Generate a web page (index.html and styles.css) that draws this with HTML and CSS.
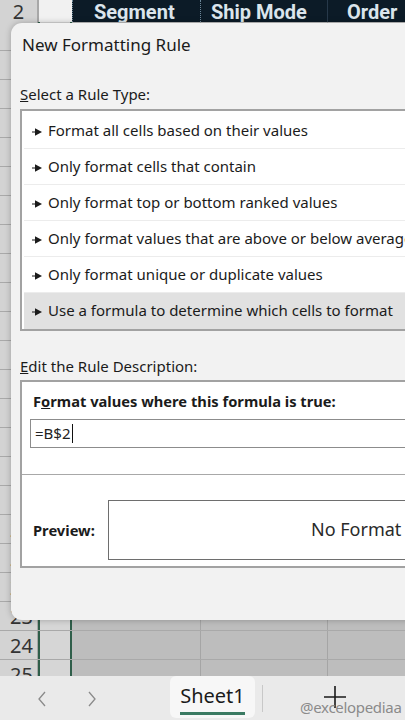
FILE: index.html
```html
<!DOCTYPE html>
<html>
<head>
<meta charset="utf-8">
<link rel="stylesheet" href="styles.css">
</head>
<body>
<div class="sheet">
  <div class="row head">
    <div class="rh">2</div>
    <div class="ca"></div>
    <div class="hdr">
      <div class="hc hb">Segment</div>
      <div class="hc hcc">Ship Mode</div>
      <div class="hc hd">Order</div>
    </div>
  </div>
  <div class="grid">
    <div class="row"><div class="rh">3</div><div class="ca"></div><div class="cells"><div class="cb"></div><div class="cc"></div><div class="cd"></div></div></div>
    <div class="row"><div class="rh">4</div><div class="ca"></div><div class="cells"><div class="cb"></div><div class="cc"></div><div class="cd"></div></div></div>
    <div class="row"><div class="rh">5</div><div class="ca"></div><div class="cells"><div class="cb"></div><div class="cc"></div><div class="cd"></div></div></div>
    <div class="row"><div class="rh">6</div><div class="ca"></div><div class="cells"><div class="cb"></div><div class="cc"></div><div class="cd"></div></div></div>
    <div class="row"><div class="rh">7</div><div class="ca"></div><div class="cells"><div class="cb"></div><div class="cc"></div><div class="cd"></div></div></div>
    <div class="row"><div class="rh">8</div><div class="ca"></div><div class="cells"><div class="cb"></div><div class="cc"></div><div class="cd"></div></div></div>
    <div class="row"><div class="rh">9</div><div class="ca"></div><div class="cells"><div class="cb"></div><div class="cc"></div><div class="cd"></div></div></div>
    <div class="row"><div class="rh">10</div><div class="ca"></div><div class="cells"><div class="cb"></div><div class="cc"></div><div class="cd"></div></div></div>
    <div class="row"><div class="rh">11</div><div class="ca"></div><div class="cells"><div class="cb"></div><div class="cc"></div><div class="cd"></div></div></div>
    <div class="row"><div class="rh">12</div><div class="ca"></div><div class="cells"><div class="cb"></div><div class="cc"></div><div class="cd"></div></div></div>
    <div class="row"><div class="rh">13</div><div class="ca"></div><div class="cells"><div class="cb"></div><div class="cc"></div><div class="cd"></div></div></div>
    <div class="row"><div class="rh">14</div><div class="ca"></div><div class="cells"><div class="cb"></div><div class="cc"></div><div class="cd"></div></div></div>
    <div class="row"><div class="rh">15</div><div class="ca"></div><div class="cells"><div class="cb"></div><div class="cc"></div><div class="cd"></div></div></div>
    <div class="row"><div class="rh">16</div><div class="ca"></div><div class="cells"><div class="cb"></div><div class="cc"></div><div class="cd"></div></div></div>
    <div class="row"><div class="rh">17</div><div class="ca"></div><div class="cells"><div class="cb"></div><div class="cc"></div><div class="cd"></div></div></div>
    <div class="row"><div class="rh">18</div><div class="ca"></div><div class="cells"><div class="cb"></div><div class="cc"></div><div class="cd"></div></div></div>
    <div class="row"><div class="rh">19</div><div class="ca"></div><div class="cells"><div class="cb"></div><div class="cc"></div><div class="cd"></div></div></div>
    <div class="row"><div class="rh">20</div><div class="ca"></div><div class="cells"><div class="cb"></div><div class="cc"></div><div class="cd"></div></div></div>
    <div class="row"><div class="rh">21</div><div class="ca"></div><div class="cells"><div class="cb"></div><div class="cc"></div><div class="cd"></div></div></div>
    <div class="row"><div class="rh">22</div><div class="ca"></div><div class="cells"><div class="cb"></div><div class="cc"></div><div class="cd"></div></div></div>
    <div class="row"><div class="rh">23</div><div class="ca"></div><div class="cells"><div class="cb"></div><div class="cc"></div><div class="cd"></div></div></div>
    <div class="row"><div class="rh">24</div><div class="ca"></div><div class="cells"><div class="cb"></div><div class="cc"></div><div class="cd"></div></div></div>
    <div class="row"><div class="rh">25</div><div class="ca"></div><div class="cells"><div class="cb"></div><div class="cc"></div><div class="cd"></div></div></div>
  </div>
  <div class="tabbar">
    <div class="nav">
      <svg width="10" height="16" viewBox="0 0 10 16"><polyline points="8,1 2,8 8,15" fill="none" stroke="#8a8a8a" stroke-width="1.3"/></svg>
      <svg width="10" height="16" viewBox="0 0 10 16"><polyline points="2,1 8,8 2,15" fill="none" stroke="#8a8a8a" stroke-width="1.3"/></svg>
    </div>
    <div class="tab"><span class="tabtext">Sheet1</span></div>
    <div class="tabsep"></div>
    <div class="plus">
      <svg width="24" height="24" viewBox="0 0 24 24"><path d="M12 1V23M1 12H23" stroke="#1a1a1a" stroke-width="1.6" fill="none"/></svg>
    </div>
  </div>
</div>

<div class="dialog">
  <div class="title">New Formatting Rule</div>
  <div class="label sel"><u>S</u>elect a Rule Type:</div>
  <div class="list">
    <div class="item"><svg class="arr" width="10" height="8" viewBox="0 0 10 8"><path d="M0 3.4H4V4.6H0Z M3 0.3L10 4L3 7.7Z" fill="#1b1b1b"/></svg>Format all cells based on their values</div>
    <div class="item"><svg class="arr" width="10" height="8" viewBox="0 0 10 8"><path d="M0 3.4H4V4.6H0Z M3 0.3L10 4L3 7.7Z" fill="#1b1b1b"/></svg>Only format cells that contain</div>
    <div class="item"><svg class="arr" width="10" height="8" viewBox="0 0 10 8"><path d="M0 3.4H4V4.6H0Z M3 0.3L10 4L3 7.7Z" fill="#1b1b1b"/></svg>Only format top or bottom ranked values</div>
    <div class="item"><svg class="arr" width="10" height="8" viewBox="0 0 10 8"><path d="M0 3.4H4V4.6H0Z M3 0.3L10 4L3 7.7Z" fill="#1b1b1b"/></svg>Only format values that are above or below average</div>
    <div class="item"><svg class="arr" width="10" height="8" viewBox="0 0 10 8"><path d="M0 3.4H4V4.6H0Z M3 0.3L10 4L3 7.7Z" fill="#1b1b1b"/></svg>Only format unique or duplicate values</div>
    <div class="item active"><svg class="arr" width="10" height="8" viewBox="0 0 10 8"><path d="M0 3.4H4V4.6H0Z M3 0.3L10 4L3 7.7Z" fill="#1b1b1b"/></svg>Use a formula to determine which cells to format</div>
  </div>
  <div class="label edit"><u>E</u>dit the Rule Description:</div>
  <div class="desc">
    <div class="blabel">F<u>o</u>rmat values where this formula is true:</div>
    <div class="input">=B$2<span class="caret"></span></div>
    <div class="divider"></div>
    <div class="preview">
      <div class="plabel">Preview:</div>
      <div class="pbox">No Format</div>
    </div>
  </div>
</div>

<div class="watermark">@excelopediaa</div>
</body>
</html>
```

FILE: styles.css
```css
* { box-sizing: border-box; }
html, body { margin: 0; padding: 0; }
body {
  width: 405px;
  height: 720px;
  overflow: hidden;
  position: relative;
  font-family: "Noto Sans", "Open Sans", sans-serif;
  background: #bcbcbc;
}
.sheet {
  display: flex;
  flex-direction: column;
  height: 720px;
}
.row {
  display: flex;
  height: 29px;
  flex: none;
  border-bottom: 1px solid #a9a9a9;
}
.row.head {
  height: 22px;
  border-bottom: none;
}
.rh {
  width: 38px;
  flex: none;
  background: #d3d3d3;
  color: #333;
  font-size: 20px;
  line-height: 29px;
  text-align: center;
  padding-left: 6px;
  border-right: 1px solid #a8a8a8;
}
.head .rh { line-height: 24px; padding-left: 0; }
.ca {
  width: 34px;
  flex: none;
  background: #d6d6d6;
  border-left: 2px solid #2f5e4a;
  border-right: 2px solid #2f5e4a;
}
.head .ca { background: #f1f1f1; border-left-color: #a8a8a8; border-left-width: 1px; border-right: none; }
.hdr {
  flex: 1;
  display: flex;
  background: #0c1b27;
  color: #dbe5ec;
  font-family: Roboto, "Noto Sans", sans-serif;
  font-weight: 700;
  font-size: 20px;
  line-height: 24px;
}
.hc { flex: none; overflow: hidden; white-space: nowrap; }
.hb { width: 129px; padding-left: 21px; border-left: 1px dotted #6c8799; border-right: 1px dotted #6c8799; }
.hcc { width: 127px; padding-left: 10px; border-right: 1px solid #27394a; }
.hd { flex: 1; padding-left: 19px; }
.grid {
  flex: 1;
  overflow: hidden;
  display: flex;
  flex-direction: column;
}
.cells { flex: 1; display: flex; background: #bdbdbd; }
.cb { width: 129px; border-right: 1px solid #a5a5a5; }
.cc { width: 127px; border-right: 1px solid #a5a5a5; }
.cd { flex: 1; }
.tabbar {
  height: 44px;
  flex: none;
  background: #eaeaea;
  display: flex;
  align-items: stretch;
}
.nav {
  width: 170px;
  display: flex;
  align-items: center;
  gap: 40px;
  padding-left: 37px;
  padding-top: 2px;
}
.tab {
  width: 85px;
  background: #f7f7f7;
  border-radius: 6px;
  margin-bottom: 2px;
  display: flex;
  justify-content: center;
  align-items: flex-start;
}
.tabtext {
  font-family: "Noto Sans", sans-serif;
  font-size: 20px;
  line-height: 30px;
  margin-top: 5px;
  color: #1a1a1a;
  border-bottom: 3px solid #3a7a62;
  padding-bottom: 1px;
}
.tabsep {
  width: 1px;
  background: #c8c8c8;
  margin: 9px 0 8px 7px;
}
.plus {
  padding-left: 60px;
  padding-top: 9px;
}
.dialog {
  position: absolute;
  left: 11px;
  top: 23px;
  width: 520px;
  height: 597px;
  background: #f2f2f2;
  border-radius: 11px;
  box-shadow: 0 0 6px rgba(0,0,0,0.25);
  padding: 10px 0 0 9px;
  color: #1b1b1b;
}
.title {
  font-size: 17px;
  line-height: 24px;
  padding-left: 2px;
}
.label {
  font-size: 15px;
  line-height: 20px;
}
.sel { margin-top: 27px; }
.list {
  margin-top: 5px;
  background: #fff;
  border: 2px solid #a2a2a2;
  padding: 2px 0 0 2px;
  height: 222px;
}
.item {
  height: 36px;
  font-size: 15px;
  line-height: 35px;
  padding-left: 8px;
  border-bottom: 1px solid #ececec;
  white-space: nowrap;
  color: #1b1b1b;
}
.item.active { background: #e1e1e1; border-bottom: none; }
.arr { display: inline-block; margin-right: 6px; vertical-align: 0px; }
.edit { margin-top: 25px; }
.desc {
  margin-top: 4px;
  background: #fff;
  border: 2px solid #a2a2a2;
  height: 188px;
  padding: 9px 0 0 8px;
}
.blabel {
  font-weight: 700;
  font-size: 14.7px;
  line-height: 20px;
  padding-left: 3px;
}
.input {
  margin-top: 8px;
  height: 29px;
  border: 1.5px solid #8c8c8c;
  font-size: 15px;
  line-height: 26px;
  padding-left: 4px;
  color: #222;
}
.caret {
  display: inline-block;
  width: 1px;
  height: 19px;
  background: #111;
  vertical-align: -4px;
  margin-left: 1px;
}
.divider {
  margin: 26px 0 0 -8px;
  height: 1px;
  background: #a8a8a8;
}
.preview {
  margin-top: 25px;
  display: flex;
  align-items: center;
}
.plabel {
  width: 78px;
  font-weight: 700;
  font-size: 14.7px;
  padding-left: 3px;
}
.pbox {
  width: 300px;
  height: 60px;
  border: 1.5px solid #6e6e6e;
  font-size: 18px;
  line-height: 57px;
  padding-left: 202px;
  color: #2a2a2a;
  white-space: nowrap;
}
.watermark {
  position: absolute;
  left: 300px;
  top: 697px;
  font-family: "Noto Sans", sans-serif;
  font-size: 15px;
  color: #8a8a8a;
  letter-spacing: -0.3px;
}
```
